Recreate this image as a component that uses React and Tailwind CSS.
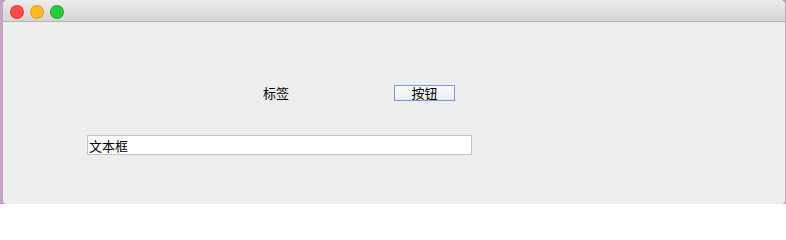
import React from "react";

const cjk = {
  fontFamily: '"Noto Sans CJK SC", "Liberation Sans", sans-serif',
};

function TrafficLights() {
  return (
    <div className="flex items-center gap-[8px] pl-[8px] pt-[6px]">
      <span className="block h-[12px] w-[12px] rounded-full bg-[#fc4b4a] ring-1 ring-[#e0393a]" />
      <span className="block h-[12px] w-[12px] rounded-full bg-[#fdb728] ring-1 ring-[#e0a020]" />
      <span className="block h-[12px] w-[12px] rounded-full bg-[#2bc93f] ring-1 ring-[#1eaa30]" />
    </div>
  );
}

export default function App() {
  return (
    <div className="flex h-[204px] w-[786px] overflow-hidden bg-[#c7a3c8]">
      <div className="ml-[3px] flex h-full w-[782px] flex-col overflow-hidden rounded-t-[5px] rounded-b-[4px] bg-[#eeeeee]">
        {/* title bar */}
        <div className="h-[22px] shrink-0 border-b border-[#b3b3b3] bg-gradient-to-b from-[#ececec] to-[#d4d4d4]">
          <TrafficLights />
        </div>

        {/* content */}
        <div className="flex flex-col text-[13px] text-black" style={cjk}>
          <div className="mt-[63px] flex items-center pl-[260px]">
            <span className="w-[131px] leading-[16px]">标签</span>
            <button className="flex h-[16px] w-[61px] items-center justify-center border border-[#6d9de0] bg-gradient-to-b from-[#fbfbfb] to-[#ececec] pb-[2px] text-[13px] leading-[13px]">
              按钮
            </button>
          </div>

          <div className="mt-[34px] pl-[84px]">
            <input
              readOnly
              value="文本框"
              className="block h-[20px] w-[385px] border border-[#c3c3c3] bg-white px-[1px] text-[13px] leading-[18px] text-black outline-none"
              style={cjk}
            />
          </div>
        </div>
      </div>
    </div>
  );
}
